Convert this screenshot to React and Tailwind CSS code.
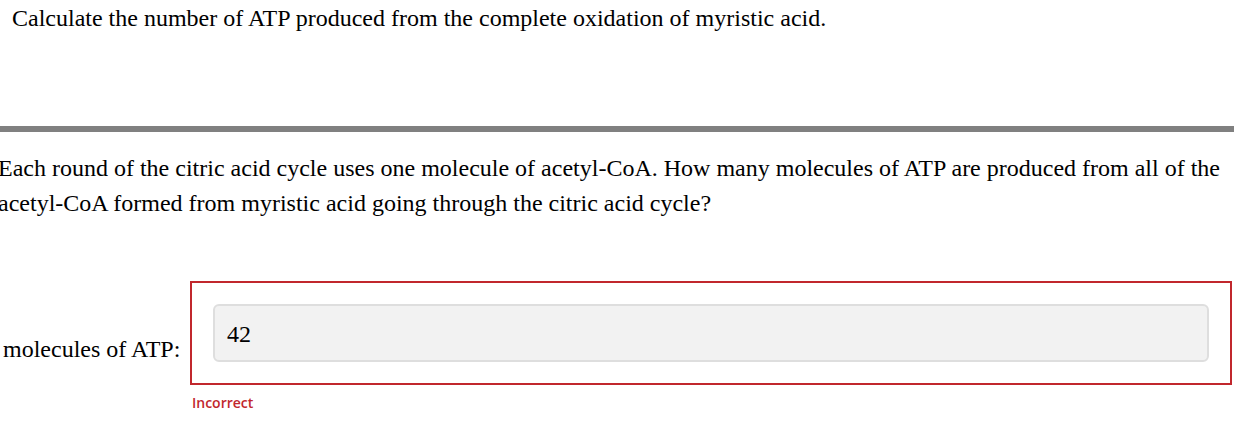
import React from "react";

export default function App() {
    return (
        <div className="w-[1234px] h-[432px] bg-white overflow-hidden text-black font-['Liberation_Serif',serif]">
            <p className="pl-[12px] pt-[4px] text-[24px] leading-[28px]">
                Calculate the number of ATP produced from the complete oxidation of myristic acid.
            </p>

            <div className="mt-[94px] h-[6px] bg-[#808080]" />

            <div className="-ml-[2px] mt-[19px] text-[24px] leading-[35px]">
                <p>
                    Each round of the citric acid cycle uses one molecule of acetyl-CoA. How many molecules of ATP are produced from all of the
                    <br />
                    acetyl-CoA formed from myristic acid going through the citric acid cycle?
                </p>
            </div>

            <div className="mt-[60px] flex items-end">
                <label className="w-[190px] pl-[3px] pb-[22px] text-[24px] leading-[28px] whitespace-nowrap">
                    molecules of ATP:
                </label>
                <div className="flex-1 mr-[2px] border-2 border-[#c1272d] px-[21px] py-[21px]">
                    <div className="h-[58px] rounded-[6px] border-2 border-[#dedede] bg-[#f2f2f2] pt-[14px] pl-[12px] text-[24px] leading-[28px]">
                        42
                    </div>
                </div>
            </div>
            <div className="pl-[192px] pt-[9px] font-['Open_Sans',sans-serif] font-semibold text-[14px] leading-[18px] text-[#c1272d]">
                Incorrect
            </div>
        </div>
    );
}
